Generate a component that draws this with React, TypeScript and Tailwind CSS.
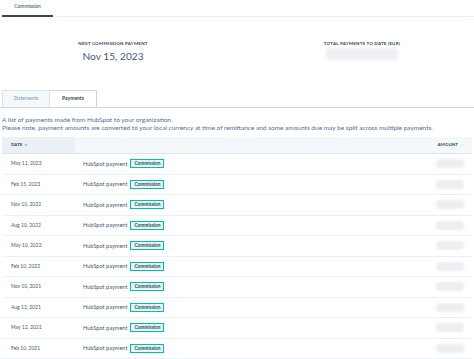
import { ChevronDown, ChevronsUpDown } from 'lucide-react'

const payments = [
  'May 11, 2023',
  'Feb 15, 2023',
  'Nov 10, 2022',
  'Aug 10, 2022',
  'May 10, 2022',
  'Feb 10, 2022',
  'Nov 10, 2021',
  'Aug 11, 2021',
  'May 12, 2021',
  'Feb 10, 2021',
]

export default function App() {
  return (
    <div className="w-[474px] h-[359px] overflow-hidden bg-white text-[#33475b]" style={{ fontFamily: 'Lato, "Noto Sans", sans-serif' }}>
      {/* Top nav */}
      <div className="h-[17px] border-b border-[#eaf0f6] flex pl-[2px]">
        <div className="w-[51px] h-[17px] flex flex-col items-center justify-between border-b-2 border-[#33475b]">
          <span className="text-[5px] leading-[6px] mt-[3px]">Commission</span>
        </div>
      </div>

      {/* Summary */}
      <div className="h-[73px] flex pt-[24px]">
        <div className="w-[226px] shrink-0 flex flex-col items-center">
          <span className="text-[4.5px] font-bold tracking-[0.2px] uppercase leading-[6px]">Next Commission Payment</span>
          <span className="text-[10.2px] leading-[14px] mt-[2px] text-[#425b76]">Nov 15, 2023</span>
        </div>
        <div className="w-[272px] shrink-0 flex flex-col items-center">
          <span className="text-[4.5px] font-bold tracking-[0.2px] uppercase leading-[6px]">Total Payments to Date (EUR)</span>
          <div className="w-[72px] h-[12px] mt-[1px] bg-[#eef0f3] blur-[1.5px] rounded"></div>
        </div>
      </div>

      {/* Tabs */}
      <div className="flex pl-[2px] h-[18px] border-b border-[#cbd6e2]">
        <div className="w-[48px] flex items-center justify-center bg-[#f5f8fa] border border-b-0 border-[#dfe3eb] text-[5px] text-[#7c98b6]">
          Statements
        </div>
        <div className="w-[47px] flex items-center justify-center bg-white border border-l-0 border-[#cbd6e2] -mb-px text-[5px] font-bold">
          Payments
        </div>
      </div>

      <div className="pl-[2px] pt-[7px] whitespace-nowrap text-[#516f90]">
        <p className="text-[6.5px] leading-[9px]">A list of payments made from HubSpot to your organization.</p>
        <p className="text-[6.5px] leading-[8px]">Please note, payment amounts are converted to your local currency at time of remittance and some amounts due may be split across multiple payments.</p>
      </div>

      {/* Table */}
      <div className="mx-[2px] mt-[5px]">
        <div className="h-[17px] flex items-center bg-[#f5f8fa] border-b border-[#dfe3eb] text-[4.5px] font-bold uppercase">
          <div className="w-[73px] h-full bg-[#eaf0f6] flex items-center pl-[9px] gap-[2px]">
            Date <ChevronDown className="w-[4px] h-[4px]" strokeWidth={3} />
          </div>
          <div className="flex-1"></div>
          <div className="flex items-center pr-[8px] gap-[2px]">
            Amount <ChevronsUpDown className="w-[4px] h-[4px] text-[#cbd6e2]" strokeWidth={3} />
          </div>
        </div>
        {payments.map(d => (
          <div key={d} className="h-[20.5px] flex items-center border-b border-[#eaf0f6] text-[5px] text-[#425b76]">
            <div className="w-[73px] pl-[9px]">{d}</div>
            <div className="pl-[8px] flex items-center gap-[3px]">
              <span className="text-[5.6px]">HubSpot payment</span>
              <span className="border border-[#00bda5] bg-[#e5f8f6] text-[4.8px] font-bold px-[3px] h-[9px] flex items-center text-[#33475b]">Commission</span>
            </div>
            <div className="flex-1"></div>
            <div className="w-[28px] h-[9px] mr-[8px] bg-[#eceef1] blur-[1px] rounded"></div>
          </div>
        ))}
      </div>
    </div>
  )
}
